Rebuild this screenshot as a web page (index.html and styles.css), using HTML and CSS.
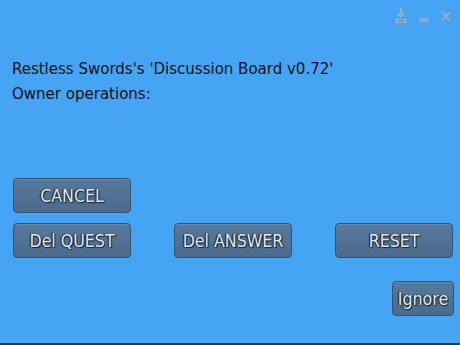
FILE: index.html
```
<!DOCTYPE html>
<html>
<head>
<meta charset="utf-8">
<link rel="stylesheet" href="styles.css">
</head>
<body>
<div class="dialog">
  <div class="titlebar">
    <svg class="icon" width="12" height="16" viewBox="0 0 12 16">
      <rect x="5" y="0" width="2.2" height="8" fill="#a3adb9"/>
      <path d="M1.5 5.5 L6 10 L10.5 5.5 Z" fill="#a3adb9"/>
      <path d="M0.5 11 L11.5 11 L11.5 15 L0.5 15 Z" fill="#a3adb9"/>
      <rect x="3" y="12.3" width="6" height="1.4" fill="#7b8896"/>
    </svg>
    <svg class="icon" width="10" height="16" viewBox="0 0 10 16">
      <rect x="0.5" y="10.5" width="9" height="3" fill="#a3adb9"/>
    </svg>
    <svg class="icon" width="10" height="16" viewBox="0 0 10 16">
      <path d="M1 4 L9 12.5 M9 4 L1 12.5" stroke="#a3adb9" stroke-width="1.7"/>
    </svg>
  </div>
  <div class="message">
    <p>Restless Swords's 'Discussion Board v0.72'</p>
    <p>Owner operations:</p>
  </div>
  <div class="buttons">
    <div class="row row-first">
      <button class="btn">CANCEL</button>
    </div>
    <div class="row row-spread">
      <button class="btn">Del QUEST</button>
      <button class="btn">Del ANSWER</button>
      <button class="btn">RESET</button>
    </div>
  </div>
  <div class="footer">
    <button class="btn btn-small">Ignore</button>
  </div>
  <div class="edge"></div>
</div>
</body>
</html>
```
FILE: styles.css
```
html, body {
  margin: 0;
  padding: 0;
}
body {
  background: #46a4f5;
  font-family: "DejaVu Sans Condensed", "DejaVu Sans", sans-serif;
}
.dialog {
  width: 460px;
  height: 345px;
  display: flex;
  flex-direction: column;
  background: #46a4f5;
  overflow: hidden;
}
.titlebar {
  height: 30px;
  display: flex;
  justify-content: flex-end;
  align-items: center;
  gap: 12px;
  padding-right: 9px;
  padding-top: 2px;
  box-sizing: border-box;
}
.message {
  padding-left: 12px;
  padding-top: 26px;
  height: 148px;
  box-sizing: border-box;
  color: #111;
  font-size: 16.7px;
}
.message p {
  margin: 0;
  line-height: 25px;
}
.buttons {
  display: flex;
  flex-direction: column;
  gap: 10px;
}
.row {
  display: flex;
  padding-left: 13px;
  padding-right: 7px;
}
.row-spread {
  justify-content: space-between;
}
.btn {
  width: 118px;
  height: 35px;
  border: 1px solid #35536f;
  border-radius: 4px;
  background: linear-gradient(#56799c, #4a6b8d);
  box-shadow: inset 0 1px 0 rgba(255,255,255,0.12);
  color: #e6e9ec;
  font-family: "DejaVu Sans Condensed", "DejaVu Sans", sans-serif;
  font-size: 17.6px;
  padding: 0;
  text-shadow: 0 0 1px #16232f, 1px 1px 1px #16232f, -1px 0 1px #16232f;
}
.footer {
  display: flex;
  justify-content: flex-end;
  padding-right: 6px;
  padding-top: 23px;
}
.btn-small {
  width: 62px;
}
.edge {
  margin-top: auto;
  height: 2px;
  background: #3b3526;
}
```
